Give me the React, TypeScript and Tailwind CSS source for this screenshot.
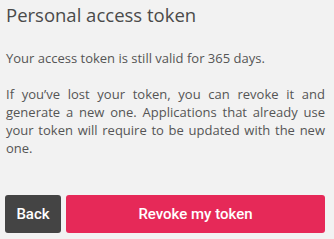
import React from "react";

export default function App() {
  return (
    <div className="w-[334px] h-[239px] bg-[#f2f2f2] pl-[5px] pr-[9px] flex flex-col">
      <h1 className="pt-[1px] text-[18.5px] leading-[28px] text-[#4a4a4a] pl-[1px] font-['Open_Sans',sans-serif]">Personal access token</h1>
      <p className="mt-[20px] text-[13px] leading-[18px] text-[#555555] text-justify pl-[1px] font-['Open_Sans',sans-serif]">
        Your access token is still valid for 365 days.
        <br />
        <br />
        If you’ve lost your token, you can revoke it and generate a new one. Applications that already use your token will require to be updated with the new one.
      </p>
      <div className="mt-auto mb-[6px] flex gap-[5px]">
        <button className="w-[56px] h-[38px] rounded-[3px] bg-[#444444] text-white text-[15px] font-medium font-['Roboto',sans-serif]">Back</button>
        <button className="flex-1 h-[38px] rounded-[3px] bg-[#e62958] text-white text-[15px] font-medium font-['Roboto',sans-serif]">Revoke my token</button>
      </div>
    </div>
  );
}
